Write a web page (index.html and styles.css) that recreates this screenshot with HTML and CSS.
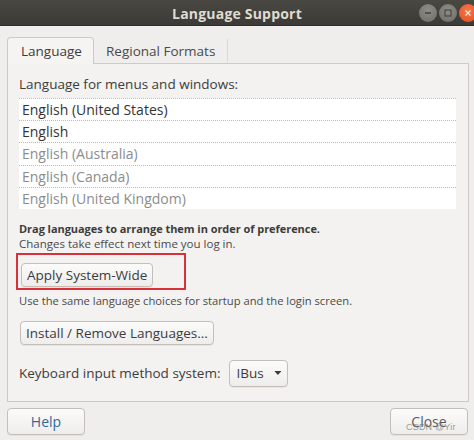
FILE: index.html
```html
<!DOCTYPE html>
<html>
<head>
<meta charset="utf-8">
<link rel="stylesheet" href="styles.css">
</head>
<body>
<div class="window">
  <header class="titlebar">
    <span></span>
    <span class="title">Language Support</span>
    <div class="controls">
      <span class="wbtn min"><svg width="8" height="8" viewBox="0 0 8 8"><path d="M1 4h6" stroke="#3d3c38" stroke-width="1.4"/></svg></span>
      <span class="wbtn max"><svg width="8" height="8" viewBox="0 0 8 8"><rect x="1" y="1" width="6" height="6" fill="none" stroke="#3d3c38" stroke-width="1"/></svg></span>
      <span class="wbtn close"><svg width="8" height="8" viewBox="0 0 8 8"><path d="M1.5 1.5l5 5M6.5 1.5l-5 5" stroke="#fbe3d8" stroke-width="1.3"/></svg></span>
    </div>
  </header>
  <main class="content">
    <nav class="tabs">
      <div class="tab active">Language</div>
      <div class="tab">Regional Formats</div>
    </nav>
    <section class="panel">
      <div class="label">Language for menus and windows:</div>
      <ul class="langlist">
        <li class="row">English (United States)</li>
        <li class="row">English</li>
        <li class="row dim">English (Australia)</li>
        <li class="row dim">English (Canada)</li>
        <li class="row dim">English (United Kingdom)</li>
      </ul>
      <p class="hint"><b>Drag languages to arrange them in order of preference.</b><br>Changes take effect next time you log in.</p>
      <div class="highlight"><button class="btn">Apply System-Wide</button></div>
      <p class="hint small">Use the same language choices for startup and the login screen.</p>
      <button class="btn install">Install / Remove Languages...</button>
      <div class="kbd-row">
        <span class="label">Keyboard input method system:</span>
        <button class="btn combo">IBus <svg width="10" height="6" viewBox="0 0 10 6"><path d="M0.5 0.5h9L5 5.5z" fill="#3c3c3c"/></svg></button>
      </div>
    </section>
    <footer class="actions">
      <button class="btn action help">Help</button>
      <div class="close-wrap">
        <button class="btn action closebtn">Close</button>
        <span class="watermark">CSDN @Yir</span>
      </div>
    </footer>
  </main>
</div>
</body>
</html>
```
FILE: styles.css
```css
* { box-sizing: border-box; }
html, body { margin: 0; padding: 0; }
body {
  width: 474px;
  height: 440px;
  overflow: hidden;
  background: #efeeec;
  font-family: "Open Sans", "DejaVu Sans", sans-serif;
  color: #3c3c3c;
}
.window { display: flex; flex-direction: column; height: 440px; }
.titlebar {
  height: 26px;
  display: grid;
  grid-template-columns: 1fr auto 1fr;
  align-items: center;
  background: linear-gradient(#4a4843, #3b3a36);
  border-bottom: 1px solid #2f2e2a;
}
.title {
  color: #dfdbd2;
  font-weight: bold;
  font-size: 14px;
  letter-spacing: 0.2px;
  padding-top: 1px;
}
.controls {
  justify-self: end;
  display: flex;
  gap: 2px;
  margin-right: -3px;
}
.wbtn {
  width: 18px; height: 18px; border-radius: 50%;
  display: flex; align-items: center; justify-content: center;
}
.wbtn.min, .wbtn.max { background: radial-gradient(circle at 50% 35%, #8f8d87, #6d6b66); }
.wbtn.close { background: radial-gradient(circle at 50% 35%, #f4764a, #e0501e); }

.content { flex: 1; display: flex; flex-direction: column; padding: 11px 5px 0 7px; }
.tabs { display: flex; height: 26px; }
.tab {
  font-size: 13.5px;
  line-height: 24px;
  padding: 1px 12px 0;
  color: #4a4a4a;
}
.tab.active {
  background: #f5f4f2;
  border: 1px solid #cdcac5;
  border-bottom: none;
  border-radius: 4px 4px 0 0;
  width: 87px;
  padding: 0 13px;
  color: #3c3c3c;
  position: relative;
  top: 1px;
  margin-top: -1px;
  line-height: 26px;
}
.tab:not(.active) { border-right: 1px solid #dcdad6; height: 23px; margin-top: 2px; line-height: 22px; }

.panel {
  border: 1px solid #cdcac5;
  background: #f3f2f0;
  height: 339px;
  width: 462px;
  padding: 11px 12px 0 11px;
  display: flex;
  flex-direction: column;
  align-items: flex-start;
}
.label { font-size: 13.5px; line-height: 18px; color: #3c3c3c; }
.langlist {
  list-style: none;
  margin: 5px 0 0;
  padding: 0;
  align-self: stretch;
  background: #fff;
}
.row {
  height: 22.2px;
  border-top: 1px dotted #eaa79b;
  font-size: 14px;
  line-height: 21px;
  padding-left: 3px;
  color: #333;
}
.row.dim { color: #8c8c8c; }
.hint {
  margin: 12px 0 0;
  font-size: 11.5px;
  line-height: 15px;
  color: #4a4a4a;
}
.hint b { color: #3c3c3c; font-size: 11px; letter-spacing: -0.05px; }
.hint.small { margin-top: 3px; font-size: 11.2px; }
.highlight {
  margin: 2px 0 0 -3px;
  border: 2px solid #d9313a;
  padding: 8px 31px 1px 3px;
}
.btn {
  font-family: inherit;
  font-size: 13.5px;
  color: #3c3c3c;
  background: linear-gradient(#fbfbfa, #eeedeb);
  border: 1px solid #c3bfb8;
  border-radius: 4px;
  height: 24px;
  padding: 0 5px;
  line-height: 22px;
  box-shadow: 0 1px 0 rgba(0,0,0,0.05);
}
.install { margin-top: 13px; margin-left: 1px; height: 24px; }
.kbd-row {
  margin-top: 15px;
  display: flex;
  align-items: center;
  gap: 9px;
}
.combo {
  height: 27px;
  width: 59px;
  display: flex;
  align-items: center;
  gap: 10px;
  padding: 0 6px;
}
.actions {
  display: flex;
  justify-content: space-between;
  margin-top: 6px;
  padding-right: 1px;
}
.action { width: 78px; height: 27px; font-size: 14px; }
.help { color: #2c6b9a; }
.closebtn { color: #5a5a5a; }
.close-wrap { position: relative; }
.watermark {
  position: absolute;
  left: 16px;
  top: 14px;
  font-size: 9px;
  color: rgba(120,120,120,0.75);
  font-family: "Liberation Sans", sans-serif;
  letter-spacing: 0.2px;
}
```
